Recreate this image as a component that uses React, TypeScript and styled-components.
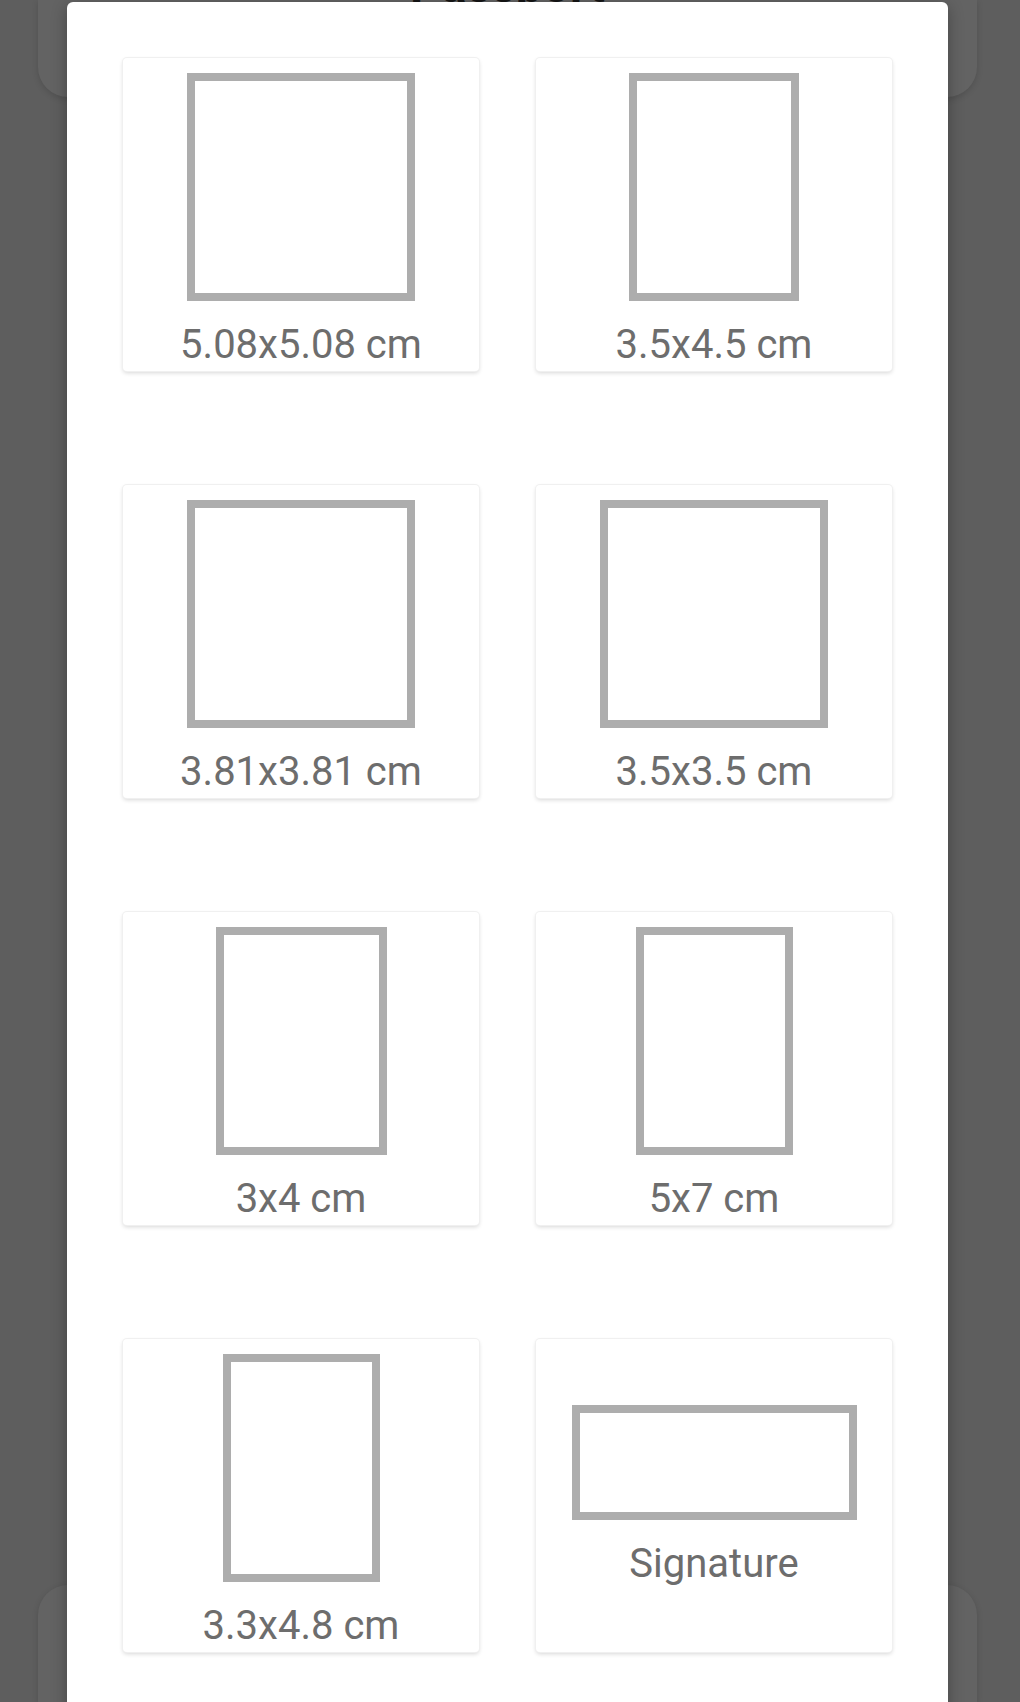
import React from "react";
import { createGlobalStyle, styled } from "styled-components";

const GlobalStyle = createGlobalStyle`
  html, body {
    margin: 0;
    padding: 0;
    background: #5e5e5e;
  }
  body {
    font-family: Roboto, "Noto Sans", "Liberation Sans", sans-serif;
  }
`;

const Screen = styled.div`
  position: relative;
  height: 1702px;
  overflow: hidden;
  background: #5e5e5e;
`;

const Underlay = styled.div`
  display: flex;
  flex-direction: column;
  justify-content: space-between;
  height: 100%;
  padding: 0 43px 0 38px;
  box-sizing: border-box;
`;

const BackCard = styled.div<{ $top?: boolean }>`
  display: flex;
  justify-content: center;
  height: ${(p) => (p.$top ? "97px" : "117px")};
  background: #636363;
  border-radius: ${(p) => (p.$top ? "0 0 30px 30px" : "30px 30px 0 0")};
  box-shadow: 0 2px 6px rgba(0, 0, 0, 0.15);
`;

const BackTitle = styled.span`
  margin-top: -34px;
  font-size: 48px;
  font-weight: 700;
  color: #151515;
  line-height: 40px;
`;

const Modal = styled.div`
  position: absolute;
  left: 67px;
  top: 2px;
  width: 881px;
  bottom: -20px;
  background: #ffffff;
  border-radius: 6px;
  box-shadow: 0 4px 16px rgba(0, 0, 0, 0.3);
`;

const Grid = styled.div`
  display: grid;
  grid-template-columns: repeat(2, 356px);
  grid-auto-rows: 313px;
  column-gap: 57px;
  row-gap: 114px;
  padding: 56px;
`;

const SizeCard = styled.div<{ $wide?: boolean }>`
  display: flex;
  flex-direction: column;
  align-items: center;
  justify-content: center;
  padding: ${(p) => (p.$wide ? "15px 0 14px" : "15px 0 3px")};
  box-sizing: border-box;
  background: #ffffff;
  border-radius: 4px;
  box-shadow: 0 0 0 1px #f0f0f0, 0 2px 4px rgba(0, 0, 0, 0.16);
`;

const Frame = styled.div<{ $w: number; $h: number }>`
  width: ${(p) => p.$w}px;
  height: ${(p) => p.$h}px;
  border: 8px solid #adadad;
  box-sizing: border-box;
  flex-shrink: 0;
`;

const Label = styled.span`
  margin-top: 20px;
  font-size: 40px;
  line-height: 47px;
  color: #6d6d6d;
  white-space: nowrap;
`;

const sizes = [
  { label: "5.08x5.08 cm", w: 228, h: 228 },
  { label: "3.5x4.5 cm", w: 170, h: 228 },
  { label: "3.81x3.81 cm", w: 228, h: 228 },
  { label: "3.5x3.5 cm", w: 228, h: 228 },
  { label: "3x4 cm", w: 171, h: 228 },
  { label: "5x7 cm", w: 157, h: 228 },
  { label: "3.3x4.8 cm", w: 157, h: 228 },
  { label: "Signature", w: 285, h: 115 },
];

function App() {
  return (
    <Screen>
      <GlobalStyle />
      <Underlay>
        <BackCard $top>
          <BackTitle>Passport</BackTitle>
        </BackCard>
        <BackCard />
      </Underlay>
      <Modal>
        <Grid>
          {sizes.map((size) => (
            <SizeCard key={size.label} $wide={size.w > size.h}>
              <Frame $w={size.w} $h={size.h} />
              <Label>{size.label}</Label>
            </SizeCard>
          ))}
        </Grid>
      </Modal>
    </Screen>
  );
}

export default App;
